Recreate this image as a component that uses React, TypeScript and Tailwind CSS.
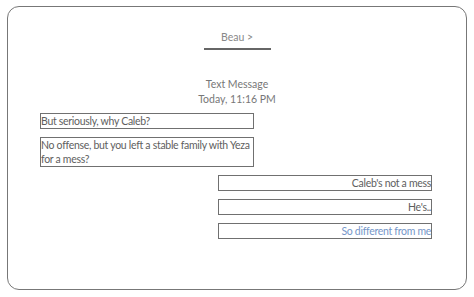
import React from "react";

type Msg = { text: React.ReactNode; mine?: boolean; blue?: boolean };

const messages: Msg[] = [
  { text: "But seriously, why Caleb?" },
  {
    text: (
      <>
        No offense, but you left a stable family with Yeza
        <br />
        for a mess?
      </>
    ),
  },
  { text: "Caleb's not a mess", mine: true },
  { text: "He's..", mine: true },
  { text: "So different from me", mine: true, blue: true },
];

function Bubble({ msg }: { msg: Msg }) {
  return (
    <div
      className={`w-[214px] border-[1.5px] border-[#707070] whitespace-nowrap overflow-hidden text-[10.5px] leading-[14px] tracking-[-0.3px] ${
        msg.mine ? "self-end mr-[34px] text-right" : "self-start ml-[32px] text-left"
      } ${msg.blue ? "text-[#7596c8]" : "text-[#5e5e5e]"}`}
    >
      {msg.text}
    </div>
  );
}

export default function App() {
  return (
    <div
      className="w-[474px] h-[297px] bg-white pl-[7px] pt-[6px]"
      style={{ fontFamily: "Lato, 'Noto Sans', sans-serif" }}
    >
      <div className="w-[460px] h-[284px] rounded-[12px] border-[1.5px] border-[#777] flex flex-col">
        <div className="flex flex-col items-center pt-[23px]">
          <p className="text-[10.5px] leading-[14px] text-[#888]">Beau &gt;</p>
          <div className="w-[67px] h-[1.5px] bg-[#666] mt-[4px]" />
        </div>
        <div className="flex flex-col items-center mt-[27px] text-[10.5px] leading-[15px] text-[#777]">
          <p>Text Message</p>
          <p>Today, 11:16 PM</p>
        </div>
        <div className="flex flex-col mt-[6px] gap-[8px]">
          {messages.slice(0, 2).map((m, i) => (
            <Bubble key={i} msg={m} />
          ))}
        </div>
        <div className="flex flex-col mt-[8px] gap-[8px]">
          {messages.slice(2).map((m, i) => (
            <Bubble key={i} msg={m} />
          ))}
        </div>
      </div>
    </div>
  );
}
